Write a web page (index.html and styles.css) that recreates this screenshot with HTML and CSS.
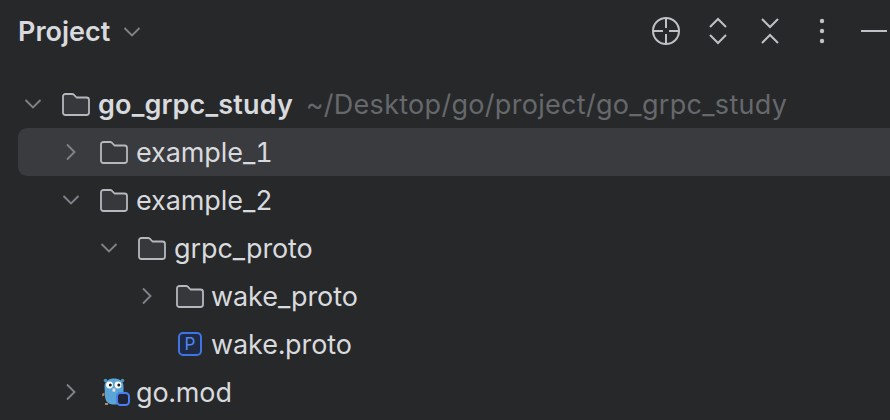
FILE: index.html
```html
<!DOCTYPE html>
<html lang="en">
<head>
<meta charset="utf-8">
<title>Project</title>
<link rel="stylesheet" href="styles.css">
</head>
<body>
<svg class="defs" width="0" height="0" aria-hidden="true">
  <defs>
    <symbol id="folder" viewBox="0 0 28 24">
      <path d="M1 4.500A2.500 2.500 0 0 1 3.500 2h6.600a2.500 2.500 0 0 1 1.700.7l2.700 2.800h10a2.500 2.500 0 0 1 2.500 2.500v12.500a2.500 2.500 0 0 1-2.500 2.500h-21A2.500 2.500 0 0 1 1 20z" stroke-width="1.800" stroke-linejoin="round"/>
    </symbol>
    <symbol id="right" viewBox="0 0 18 18"><path d="M5 1.500 12.500 9 5 16.500" fill="none" stroke="#7f8287" stroke-width="1.900"/></symbol>
    <symbol id="down" viewBox="0 0 18 18"><path d="M1.500 5 9 12.500 16.500 5" fill="none" stroke="#7f8287" stroke-width="1.900"/></symbol>
  </defs>
</svg>
<main class="panel">
  <header class="header">
    <div class="title-group">
      <h1 class="title">Project</h1>
      <svg class="title-chevron" viewBox="0 0 18 18"><use href="#down"/></svg>
    </div>
    <div class="tools">
      <svg class="tool" viewBox="0 0 30 30" fill="none" stroke="#bfc1c6" stroke-width="2">
        <circle cx="15" cy="15" r="13"/>
        <path d="M15 2v10M15 18v10M2 15h10M18 15h10"/>
      </svg>
      <svg class="tool" viewBox="0 0 30 30" fill="none" stroke="#bfc1c6" stroke-width="2">
        <path d="M7 11l8-8 8 8M7 19l8 8 8-8"/>
      </svg>
      <svg class="tool" viewBox="0 0 30 30" fill="none" stroke="#bfc1c6" stroke-width="2">
        <path d="M7 3l8 8 8-8M7 27l8-8 8 8"/>
      </svg>
      <svg class="tool" viewBox="0 0 30 30" fill="#bfc1c6">
        <circle cx="15" cy="5" r="2.200"/><circle cx="15" cy="15" r="2.200"/><circle cx="15" cy="25" r="2.200"/>
      </svg>
      <svg class="tool tool-last" viewBox="0 0 30 30" fill="none" stroke="#bfc1c6" stroke-width="2">
        <path d="M2 15h26"/>
      </svg>
    </div>
  </header>
  <ul class="tree">
    <li class="row level-0">
      <svg class="chev"><use href="#down"/></svg>
      <svg class="icon folder"><use href="#folder"/></svg>
      <span class="name root-name">go_grpc_study</span>
      <span class="path">~/Desktop/go/project/go_grpc_study</span>
    </li>
    <li class="row level-1 selected">
      <svg class="chev"><use href="#right"/></svg>
      <svg class="icon folder"><use href="#folder"/></svg>
      <span class="name">example_1</span>
    </li>
    <li class="row level-1">
      <svg class="chev"><use href="#down"/></svg>
      <svg class="icon folder"><use href="#folder"/></svg>
      <span class="name">example_2</span>
    </li>
    <li class="row level-2">
      <svg class="chev"><use href="#down"/></svg>
      <svg class="icon folder"><use href="#folder"/></svg>
      <span class="name">grpc_proto</span>
    </li>
    <li class="row level-3">
      <svg class="chev"><use href="#right"/></svg>
      <svg class="icon folder"><use href="#folder"/></svg>
      <span class="name">wake_proto</span>
    </li>
    <li class="row level-3">
      <span class="chev"></span>
      <span class="icon proto"><span class="proto-letter">P</span></span>
      <span class="name">wake.proto</span>
    </li>
    <li class="row level-1">
      <svg class="chev"><use href="#right"/></svg>
      <svg class="icon gopher" viewBox="0 0 28 28">
        <circle cx="3.500" cy="2.500" r="1.800" fill="#4d8fb8"/>
        <circle cx="20.500" cy="2.500" r="1.800" fill="#4d8fb8"/>
        <path d="M2.500 8C2.500 3 7 .5 12 .5s9.500 2.500 9.500 7.500v8l-3 9c-2 1-4 1.500-6.500 1.500-5.500 0-8.500-2.500-9-8z" fill="#5aa5d6"/>
        <circle cx="7.500" cy="7" r="3.400" fill="#fff"/>
        <circle cx="16" cy="7" r="3.400" fill="#fff"/>
        <circle cx="8.300" cy="7" r="1.500" fill="#1d1d1d"/>
        <circle cx="16.800" cy="7" r="1.500" fill="#1d1d1d"/>
        <path d="M10.500 10.500h2.800v3.200h-2.800z" fill="#e9dfd3"/>
        <path d="M0 16l2.500-1.500v3L.5 18.500zM3 25h3v2H3z" fill="#b08968"/>
        <rect x="15" y="15" width="12" height="12" rx="3.500" fill="#1f2536" stroke="#4a7ff0" stroke-width="2"/>
      </svg>
      <span class="name">go.mod</span>
    </li>
  </ul>
</main>
</body>
</html>
```
FILE: styles.css
```css
* { box-sizing: border-box; }

html, body {
  margin: 0;
  height: 100%;
  background: #27282a;
  overflow: hidden;
}

body {
  font-family: Inter, "Noto Sans", "Liberation Sans", sans-serif;
  color: #d8dade;
}

.defs { display: block; height: 0; }

.panel {
  width: 890px;
  height: 420px;
  overflow: hidden;
}

.header {
  display: flex;
  align-items: center;
  justify-content: space-between;
  height: 62px;
  padding-left: 18px;
}

.title-group {
  display: flex;
  align-items: center;
  gap: 13px;
}

.title {
  margin: 0;
  font-size: 27px;
  font-weight: 600;
  color: #d8dade;
}

.title-chevron {
  width: 18px;
  height: 18px;
  margin-top: 2px;
}

.tools {
  display: flex;
  align-items: center;
  gap: 22px;
}

.tool {
  width: 30px;
  height: 30px;
  flex: none;
}

.tool-last { margin-right: 1px; }

.tree {
  list-style: none;
  margin: 18px 0 0;
  padding: 0;
}

.row {
  display: flex;
  align-items: center;
  height: 48px;
  margin-left: 18px;
  font-size: 27px;
  font-feature-settings: "tnum";
  white-space: nowrap;
}

.level-0 { padding-left: 6px; }
.level-1 { padding-left: 44px; }
.level-2 { padding-left: 82px; }
.level-3 { padding-left: 120px; }

.selected {
  background: #3a3b3f;
  border-radius: 9px 0 0 9px;
}

.chev {
  width: 18px;
  height: 18px;
  margin-right: 20px;
  flex: none;
}

.icon {
  width: 28px;
  height: 24px;
  flex: none;
}

.folder {
  fill: #37383c;
  stroke: #b6b8bd;
}

.name {
  margin-left: 8px;
  color: #d8dade;
  letter-spacing: -0.08px;
}

.level-3 .name { margin-left: 7px; }

.root-name {
  font-weight: 600;
  letter-spacing: 0.15px;
}

.path {
  margin-left: 13px;
  color: #66686c;
  letter-spacing: 0.3px;
}

.proto {
  display: flex;
  align-items: center;
  justify-content: center;
  width: 24px;
  height: 24px;
  margin: 0 2px;
  border: 2.500px solid #3f74e6;
  border-radius: 5px;
  background: #1f2a44;
}

.proto-letter {
  font-size: 17px;
  line-height: 1;
  color: #4f86f0;
}

.gopher {
  width: 28px;
  height: 28px;
  margin-left: 2px;
}

.gopher + .name { margin-left: 6px; }
```
